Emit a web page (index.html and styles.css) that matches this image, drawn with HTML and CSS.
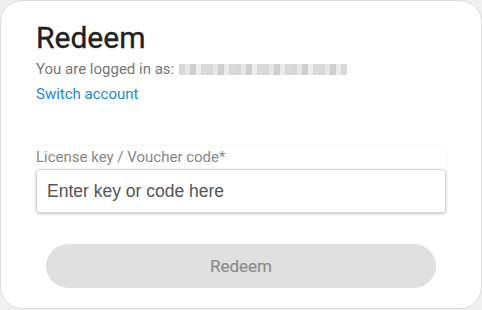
FILE: index.html
```html
<!DOCTYPE html>
<html>
<head>
<meta charset="utf-8">
<link rel="stylesheet" href="styles.css">
</head>
<body>
<div class="card">
  <h1 class="title">Redeem</h1>
  <p class="logged">You are logged in as: <span class="blur"></span></p>
  <a class="switch" href="#">Switch account</a>
  <div class="field">
    <label class="label">License key / Voucher code*</label>
    <div class="input">Enter key or code here</div>
  </div>
  <div class="btn-row">
    <button class="btn">Redeem</button>
  </div>
</div>
</body>
</html>
```

FILE: styles.css
```css
html, body {
  margin: 0;
  padding: 0;
  background: #f0f0f0;
  font-family: Roboto, "Liberation Sans", sans-serif;
}
.card {
  box-sizing: border-box;
  width: 482px;
  height: 309px;
  background: #fff;
  border: 1px solid #dcdcdc;
  border-radius: 22px;
  padding: 19px 36px 0 35px;
  display: flex;
  flex-direction: column;
}
.title {
  margin: 0;
  font-size: 30px;
  font-weight: 400;
  line-height: 36px;
  color: #222;
  -webkit-text-stroke: 0.35px #222;
}
.logged {
  margin: 4px 0 0 0;
  font-size: 15px;
  line-height: 18px;
  color: #777;
  display: flex;
  align-items: center;
}
.blur {
  display: inline-block;
  width: 168px;
  height: 11px;
  margin-left: 5px;
  background:
    repeating-linear-gradient(90deg, #d8d8d8 0 6px, #e6e6e6 6px 11px, #cfcfcf 11px 17px, #ececec 17px 22px, #dadada 22px 28px);
}
.switch {
  margin: 7px 0 0 0;
  font-size: 15px;
  line-height: 18px;
  color: #1a88e0;
  text-decoration: none;
  align-self: flex-start;
}
.field {
  margin-top: 43px;
  width: 410px;
  border-radius: 6px;
  box-shadow: 0 0 3px rgba(0,0,0,0.06);
  display: flex;
  flex-direction: column;
}
.label {
  font-size: 15px;
  line-height: 23px;
  color: #888;
}
.input {
  box-sizing: border-box;
  height: 44px;
  border: 1px solid #d6d6d6;
  border-radius: 4px;
  box-shadow: 0 1px 3px rgba(0,0,0,0.2);
  padding: 0 10px;
  display: flex;
  align-items: center;
  font-family: "Liberation Sans", Arial, sans-serif;
  font-size: 17.5px;
  color: #555;
}
.btn-row {
  margin-top: 31px;
  display: flex;
  justify-content: center;
  width: 410px;
}
.btn {
  width: 390px;
  height: 44px;
  border: none;
  border-radius: 22px;
  background: #e0e0e0;
  color: #8c8c8c;
  font-family: Roboto, sans-serif;
  font-size: 17px;
  font-weight: 400;
  -webkit-text-stroke: 0.2px #8c8c8c;
}
```
